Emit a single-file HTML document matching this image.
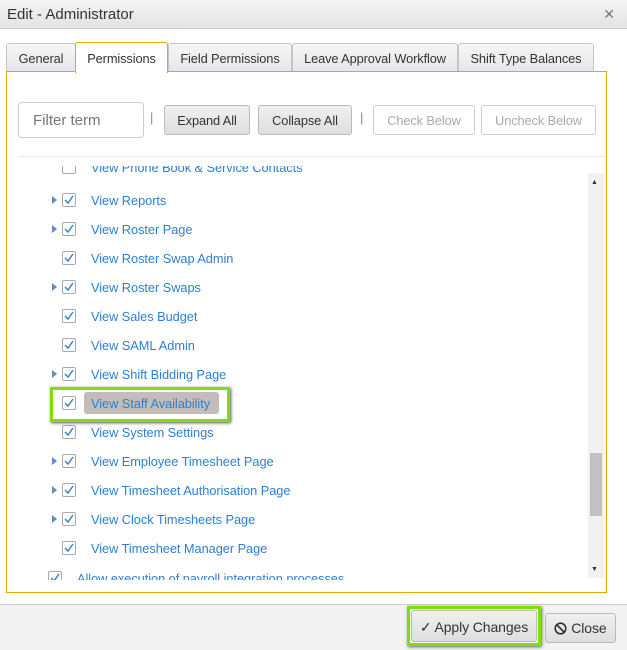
<!DOCTYPE html>
<html><head><style>
*{box-sizing:border-box}
body{margin:0;width:627px;height:650px;background:#fff;font-family:"Liberation Sans",Arial,sans-serif;position:relative;overflow:hidden;font-size:13px}
.abs{position:absolute}
.title{left:0;top:0;width:627px;height:29px;background:linear-gradient(#f4f4f4,#e3e3e3);border-bottom:1px solid #c8c8c8;font-size:15px;color:#333;padding:6px 0 0 7px}
.x{right:12px;top:6px;color:#777;font-size:14px}
.tab{top:43px;height:29px;border:1px solid #c5c5c5;border-bottom:none;background:linear-gradient(#f6f6f6,#e6e6e6);border-radius:3px 3px 0 0;color:#333;text-align:center;padding-top:7px;font-size:12.8px;letter-spacing:-0.1px;white-space:nowrap}
.panel{left:6px;top:71px;width:601px;height:522px;border:1px solid #e8a800}
.btn{top:105px;height:30px;border:1px solid #bbb;border-radius:3px;background:linear-gradient(#f0f0f0,#dedede);color:#333;text-align:center;padding-top:7px;font-size:12.8px;letter-spacing:-0.1px}
.btn.dis{background:#fff;border-color:#ccc;color:#aaa}
.sep{top:110px;color:#888}
.row{height:20px;font-size:12.8px;letter-spacing:-0.05px;color:#2e7fd1}
.cb{width:14px;height:14px;border:1px solid #aaa;border-radius:2px;background:#fff}
.cb svg{position:absolute;left:1px;top:1px}
.arr{width:0;height:0;border-left:5px solid #5a8fc4;border-top:4px solid transparent;border-bottom:4px solid transparent}
</style></head><body>
<div class="abs title">Edit - Administrator</div>
<div class="abs x">✕</div>

<div class="abs tab" style="left:6px;width:70px">General</div>
<div class="abs tab" style="left:168px;width:124px">Field Permissions</div>
<div class="abs tab" style="left:292px;width:166px">Leave Approval Workflow</div>
<div class="abs tab" style="left:458px;width:136px">Shift Type Balances</div>
<div class="abs panel"></div>
<div class="abs" style="left:75px;top:42px;width:93px;height:31px;background:#fff;border:1px solid #e8a800;border-bottom:none;border-radius:3px 3px 0 0;text-align:center;padding-top:8px;color:#333;font-size:12.8px;letter-spacing:-0.1px">Permissions</div>

<div class="abs" style="left:18px;top:102px;width:126px;height:36px;border:1px solid #ccc;border-radius:4px;color:#777;font-size:15px;padding:9px 0 0 14px">Filter term</div>
<div class="abs sep" style="left:150px">|</div>
<div class="abs btn" style="left:164px;width:86px">Expand All</div>
<div class="abs btn" style="left:258px;width:94px">Collapse All</div>
<div class="abs sep" style="left:360px">|</div>
<div class="abs btn dis" style="left:373px;width:102px">Check Below</div>
<div class="abs btn dis" style="left:481px;width:115px">Uncheck Below</div>
<div class="abs" style="left:18px;top:156px;width:586px;height:1px;background:#e6e6e6"></div>

<div class="abs" style="left:7px;top:166px;width:580px;height:414px;overflow:hidden">
<div id="list"></div>
</div>
<div class="abs" style="left:588px;top:173px;width:16px;height:405px;background:#f1f1f1"></div>
<div class="abs" style="left:591px;top:179px;font-size:7px;color:#333">▲</div>
<div class="abs" style="left:591px;top:566px;font-size:7px;color:#333">▼</div>
<div class="abs" style="left:590px;top:453px;width:12px;height:63px;background:#c1c1c1"></div>

<div class="abs" style="left:0;top:604px;width:627px;height:46px;background:#f3f3f3;border-top:1px solid #ccc"></div>
<div class="abs" style="left:407px;top:606px;width:134px;height:40px;border:3px solid #7fe000;box-shadow:1px 1px 3px #666"></div>
<div class="abs btn" style="left:411px;top:610px;width:126px;height:32px;padding-top:8px;font-size:14px;color:#333">✓ Apply Changes</div>
<div class="abs btn" style="left:545px;top:613px;width:71px;height:30px;font-size:14px;color:#333;padding-top:6px"><svg width="13" height="13" style="vertical-align:-2px"><circle cx="6.5" cy="6.5" r="5.3" stroke="#333" stroke-width="1.6" fill="none"/><path d="M3 3 L10 10" stroke="#333" stroke-width="1.6"/></svg> Close</div>

<script>
var items=[[167,1,0,"View Phone Book & Service Contacts",0],[200,1,1,"View Reports"],[229,1,1,"View Roster Page"],[258,1,0,"View Roster Swap Admin"],[287,1,1,"View Roster Swaps"],[316,1,0,"View Sales Budget"],[345,1,0,"View SAML Admin"],[374,1,1,"View Shift Bidding Page"],[403,1,0,"View Staff Availability"],[432,1,0,"View System Settings"],[461,1,1,"View Employee Timesheet Page"],[490,1,1,"View Timesheet Authorisation Page"],[519,1,1,"View Clock Timesheets Page"],[548,1,0,"View Timesheet Manager Page"],[578,0,0,"Allow execution of payroll integration processes"]];
var h="";
items.forEach(function(it){
 var y=it[0]-166,ck=it.length<5;
 var cbx=(it[1]?62:48)-7, tx=(it[1]?91:77)-7;
 if(it[2]) h+='<div class="abs arr" style="left:45px;top:'+(y-4)+'px"></div>';
 h+='<div class="abs cb" style="left:'+cbx+'px;top:'+(y-7)+'px">'+(ck?'<svg width="10" height="10"><path d="M1 5 L4 8 L9 1" stroke="#2e7fd1" stroke-width="1.4" fill="none"/></svg>':'')+'</div>';
 if(it[3]=="View Staff Availability") h+='<div class="abs" style="left:77px;top:'+(y-11)+'px;width:135px;height:22px;background:#c4bcb8;border-radius:3px"></div>';
 h+='<div class="abs row" style="left:'+tx+'px;top:'+(y-7)+'px;white-space:nowrap">'+it[3]+'</div>';
});
document.getElementById('list').innerHTML=h;
</script>
<div class="abs" style="left:50px;top:387px;width:180px;height:35px;border:3px solid #7fe000;box-shadow:1px 1px 3px #555"></div>
</body></html>
